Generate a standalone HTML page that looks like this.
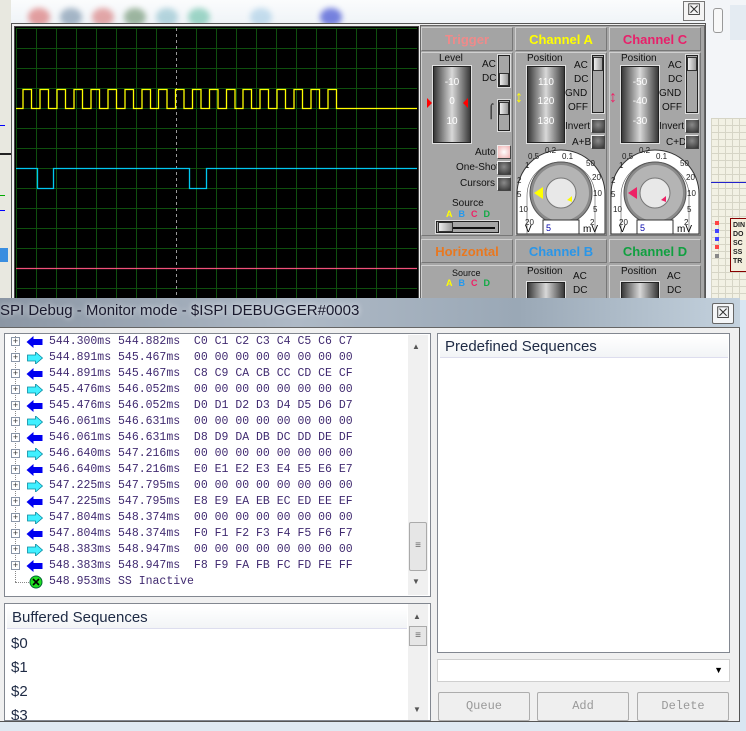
<!DOCTYPE html>
<html><head><meta charset="utf-8"><style>
*{margin:0;padding:0;box-sizing:border-box}
body{width:746px;height:731px;overflow:hidden;position:relative;background:#dfe9f2;font-family:"Liberation Sans",sans-serif}
.a{position:absolute}
.sch{background-color:#f2f1e4;background-image:linear-gradient(#d6d5c6 1px,transparent 1px),linear-gradient(90deg,#d6d5c6 1px,transparent 1px);background-size:7px 7px}
.hd{position:absolute;height:24px;background:#a4a4a4;border:1px solid #cfcfcf;border-right-color:#777;border-bottom-color:#777;font-weight:bold;font-size:13px;text-align:center;line-height:24px}
.pl{position:absolute;background:#a6a6a6;border:1px solid #d0d0d0;border-right-color:#777;border-bottom-color:#777}
.lb{position:absolute;font-size:10px;color:#111}
.drum{position:absolute;border:1px solid #222;background:linear-gradient(90deg,#3a3a3a,#9a9a9a 30%,#d8d8d8 50%,#9a9a9a 70%,#3a3a3a);outline:1px solid #e0e0e0}
.dn{position:absolute;width:100%;text-align:center;font-size:10px;color:#fff}
.btn{position:absolute;width:14px;height:14px;background:radial-gradient(circle at 50% 40%,#8a8a8a,#333);border:1px solid #eee;border-right-color:#444;border-bottom-color:#444}
.sl{position:absolute;background:#a6a6a6;border:1px solid #222;outline:1px solid #ddd}
.th{position:absolute;background:linear-gradient(90deg,#eee,#999);border:1px solid #333}
.row{position:absolute;left:49px;font-family:"Liberation Mono",monospace;font-size:11.5px;color:#402a70;white-space:pre;height:16px;line-height:16px}
.pb{position:absolute;left:11px;width:9px;height:9px;border:1px solid #8a96a8;background:#fff;font-size:9px;line-height:7px;text-align:center;color:#333}
.ar{position:absolute;left:26px}
.wb{position:absolute;background:#fff;border:1px solid #828790}
.bt{position:absolute;top:692px;height:29px;border:1px solid #adadad;background:#efefef;font-family:"Liberation Mono",monospace;font-size:12px;color:#999;text-align:center;line-height:27px;border-radius:2px}
.blob{position:absolute;top:8px;width:22px;height:18px;border-radius:50%;filter:blur(3px);opacity:.45}
</style></head><body>
<div class="a" style="left:0;top:0;width:746px;height:26px;background:linear-gradient(#fbfcfd,#eef3f7)"></div>
<div class="blob" style="left:28px;background:#c33"></div>
<div class="blob" style="left:60px;background:#468"></div>
<div class="blob" style="left:92px;background:#c44"></div>
<div class="blob" style="left:124px;background:#363"></div>
<div class="blob" style="left:156px;background:#6ab"></div>
<div class="blob" style="left:188px;background:#3a8"></div>
<div class="blob" style="left:250px;background:#8bd"></div>
<div class="blob" style="left:320px;background:#23c;opacity:.6"></div>
<div class="a" style="left:0;top:0;width:11px;height:300px;background:#e8e8e0"></div>
<div class="a" style="left:0;top:125px;width:5px;height:1px;background:#00f"></div>
<div class="a" style="left:0;top:153px;width:11px;height:2px;background:#222"></div>
<div class="a" style="left:0;top:195px;width:5px;height:1px;background:#0a0"></div>
<div class="a" style="left:0;top:210px;width:5px;height:1px;background:#00f"></div>
<div class="a" style="left:0;top:248px;width:8px;height:14px;background:#3a8ee0"></div>
<div class="a" style="left:705px;top:0;width:41px;height:300px;background:#f3f5f8"></div>
<div class="a" style="left:713px;top:8px;width:10px;height:25px;border:1px solid #999;border-radius:3px;background:#f8f8f8"></div>
<div class="a" style="left:730px;top:5px;width:16px;height:35px;background:#e4ebf2"></div>
<div class="a sch" style="left:711px;top:118px;width:35px;height:182px"></div>
<div class="a" style="left:711px;top:182px;width:35px;height:1px;background:#22c"></div>
<div class="a" style="left:730px;top:218px;width:18px;height:54px;border:1px solid #800;background:#f3eedd"></div>
<div class="a" style="left:733px;top:221px;font-size:7px;line-height:9px;font-weight:bold;color:#222">DIN<br>DO<br>SC<br>SS<br>TR</div>
<div class="a" style="left:715px;top:221px;width:4px;height:4px;background:#f44"></div>
<div class="a" style="left:715px;top:229px;width:4px;height:4px;background:#44f"></div>
<div class="a" style="left:715px;top:237px;width:4px;height:4px;background:#44f"></div>
<div class="a" style="left:715px;top:245px;width:4px;height:4px;background:#f44"></div>
<div class="a" style="left:715px;top:254px;width:4px;height:4px;background:#888"></div>
<div class="a" style="left:11px;top:23px;width:695px;height:280px;background:#f0f0f0;border:1px solid #555"></div>
<div class="a" style="left:683px;top:1px;width:22px;height:20px;border:1px solid #777;background:#f4f4f4;font-size:16px;line-height:18px;text-align:center;color:#333">☒</div>
<div class="a" style="left:14px;top:26px;width:405px;height:275px;border:1px solid #444;background:#000"></div>
<svg class="a" style="left:0;top:0" width="420" height="300">
<g stroke="#0e4f0e" stroke-width="1">
<path d="M36.5 28V298M56.5 28V298M76.5 28V298M96.5 28V298M116.5 28V298M136.5 28V298M156.5 28V298M196.5 28V298M216.5 28V298M236.5 28V298M256.5 28V298M276.5 28V298M296.5 28V298M316.5 28V298M336.5 28V298M356.5 28V298M376.5 28V298M396.5 28V298M16 28.5H417M16 48.5H417M16 68.5H417M16 88.5H417M16 108.5H417M16 128.5H417M16 148.5H417M16 168.5H417M16 188.5H417M16 208.5H417M16 228.5H417M16 248.5H417M16 268.5H417M16 288.5H417"/>
<path d="M16.5 28V298"/>
</g>
<path d="M176.5 28V298" stroke="#999" stroke-dasharray="3 3"/>
<path fill="none" stroke="#ffff00" stroke-width="1.3" d="M16 108.5H23V89.5H31.5V108.5H40V89.5H48.5V108.5H57V89.5H65.5V108.5H74V89.5H82.5V108.5H91V89.5H99.5V108.5H108V89.5H116.5V108.5H125V89.5H133.5V108.5H142V89.5H150.5V108.5H158.5V89.5H167V108.5H175.5V89.5H184V108.5H192.5V89.5H201V108.5H209.5V89.5H218V108.5H226.5V89.5H235V108.5H243V89.5H251.5V108.5H260V89.5H268.5V108.5H277V89.5H285.5V108.5H294V89.5H302.5V108.5H311V89.5H319.5V108.5H328V89.5H336.5V108.5H417"/>
<path fill="none" stroke="#00c8f0" stroke-width="1.3" d="M16 168.5H37.5V188.5H53.5V168.5H189.5V188.5H206.5V168.5H417"/>
<path stroke="#f0507a" stroke-width="1.3" d="M16 268.5H417"/>
</svg>
<div class="a" style="left:420px;top:25px;width:285px;height:275px;background:#a6a6a6;border:1px solid #666"></div>
<div class="hd" style="left:421px;top:27px;width:92px;color:#f08a8a">Trigger</div>
<div class="hd" style="left:515px;top:27px;width:92px;color:#ffff00">Channel A</div>
<div class="hd" style="left:609px;top:27px;width:92px;color:#e8206a">Channel C</div>
<div class="pl" style="left:421px;top:52px;width:92px;height:184px"></div>
<div class="pl" style="left:515px;top:52px;width:92px;height:184px"></div>
<div class="pl" style="left:609px;top:52px;width:92px;height:184px"></div>
<div class="hd" style="left:421px;top:239px;width:92px;color:#e87820">Horizontal</div>
<div class="hd" style="left:515px;top:239px;width:92px;color:#2a96e8">Channel B</div>
<div class="hd" style="left:609px;top:239px;width:92px;color:#10a040">Channel D</div>
<div class="pl" style="left:421px;top:265px;width:92px;height:40px"></div>
<div class="pl" style="left:515px;top:265px;width:92px;height:40px"></div>
<div class="pl" style="left:609px;top:265px;width:92px;height:40px"></div>
<div class="lb" style="left:439px;top:53px">Level</div>
<div class="drum" style="left:433px;top:66px;width:38px;height:77px"><div class="dn" style="top:10px">-10</div><div class="dn" style="top:29px">0</div><div class="dn" style="top:49px">10</div></div>
<div class="a" style="left:427px;top:98px;width:0;height:0;border:5px solid transparent;border-left-color:#f00"></div>
<div class="a" style="left:463px;top:98px;width:0;height:0;border:5px solid transparent;border-right-color:#f00;border-left:0"></div>
<div class="lb" style="left:482px;top:59px">AC</div><div class="lb" style="left:482px;top:73px">DC</div>
<div class="sl" style="left:498px;top:55px;width:12px;height:32px"><div class="th" style="left:0;top:17px;width:10px;height:13px"></div></div>
<div class="sl" style="left:498px;top:100px;width:12px;height:31px"><div class="th" style="left:0;top:1px;width:10px;height:13px"></div></div>
<div class="lb" style="left:487px;top:102px;font-size:14px">⌠</div>
<div class="lb" style="left:475px;top:147px">Auto</div><div class="btn" style="left:497px;top:145px;background:radial-gradient(#fff,#f0b0b0)"></div>
<div class="lb" style="left:456px;top:162px">One-Shot</div><div class="btn" style="left:497px;top:161px"></div>
<div class="lb" style="left:460px;top:178px">Cursors</div><div class="btn" style="left:497px;top:177px"></div>
<div class="lb" style="left:452px;top:198px">Source</div>
<div class="lb" style="left:446px;top:209px;font-size:9px;font-weight:bold;letter-spacing:6px"><span style="color:#ff0">A</span><span style="color:#29e">B</span><span style="color:#e26">C</span><span style="color:#1a4">D</span></div>
<div class="sl" style="left:436px;top:221px;width:63px;height:12px;background:#a6a6a6"><div class="a" style="left:14px;top:5px;width:44px;height:2px;background:#111"></div><div class="th" style="left:1px;top:0;width:15px;height:10px"></div></div>
<div class="lb" style="left:527px;top:53px">Position</div>
<div class="drum" style="left:527px;top:66px;width:38px;height:77px"><div class="dn" style="top:10px">110</div><div class="dn" style="top:29px">120</div><div class="dn" style="top:49px">130</div></div>
<div class="a" style="left:515px;top:89px;color:#ff0;font-size:16px;font-weight:bold">↕</div>
<div class="lb" style="left:574px;top:59px;line-height:14px">AC<br>DC<br><span style="margin-left:-9px">GND</span><br><span style="margin-left:-6px">OFF</span></div>
<div class="sl" style="left:592px;top:55px;width:12px;height:58px"><div class="th" style="left:0;top:1px;width:10px;height:14px"></div></div>
<div class="lb" style="left:565px;top:121px">Invert</div><div class="btn" style="left:591px;top:119px"></div>
<div class="lb" style="left:572px;top:137px">A+B</div><div class="btn" style="left:591px;top:135px"></div>
<div class="lb" style="left:621px;top:53px">Position</div>
<div class="drum" style="left:621px;top:66px;width:38px;height:77px"><div class="dn" style="top:10px">-50</div><div class="dn" style="top:29px">-40</div><div class="dn" style="top:49px">-30</div></div>
<div class="a" style="left:609px;top:89px;color:#e26;font-size:16px;font-weight:bold">↕</div>
<div class="lb" style="left:668px;top:59px;line-height:14px">AC<br>DC<br><span style="margin-left:-9px">GND</span><br><span style="margin-left:-6px">OFF</span></div>
<div class="sl" style="left:686px;top:55px;width:12px;height:58px"><div class="th" style="left:0;top:1px;width:10px;height:14px"></div></div>
<div class="lb" style="left:659px;top:121px">Invert</div><div class="btn" style="left:685px;top:119px"></div>
<div class="lb" style="left:666px;top:137px">C+D</div><div class="btn" style="left:685px;top:135px"></div>
<svg class="a" style="left:515px;top:144px" width="186" height="92">
<g id="dial">
<path d="M2 90V50A44 44 0 0 1 90 50V90Z" fill="#fff" stroke="#333"/>
<path d="M12 90V52A34 34 0 0 1 80 52V90" fill="none" stroke="#555" stroke-width=".6"/>
<circle cx="46" cy="49" r="31" fill="#8a8a8a" stroke="#555"/>
<circle cx="46" cy="49" r="28" fill="#b4b4b4"/>
<circle cx="46" cy="49" r="15" fill="#e8e8e8" stroke="#777"/>
<rect x="28" y="76" width="36" height="14" fill="#fff" stroke="#333"/>
<g font-size="8" font-family="Liberation Sans" fill="#222">
<text x="13" y="15">0.5</text><text x="30" y="9">0.2</text><text x="47" y="15">0.1</text>
<text x="10" y="24">1</text><text x="2" y="39">2</text><text x="2" y="53">5</text><text x="4" y="68">10</text><text x="10" y="81">20</text>
<text x="71" y="22">50</text><text x="77" y="36">20</text><text x="78" y="52">10</text><text x="78" y="68">5</text><text x="75" y="81">2</text>
</g>
<text x="10" y="88" font-size="10" font-family="Liberation Sans">V</text><text x="68" y="88" font-size="10" font-family="Liberation Sans">mV</text>
<text x="31" y="87" font-size="9" font-family="Liberation Sans" fill="#00a">5</text>
</g>
<path d="M19 49l9-6v12z" fill="#ff0"/><path d="M52 56l5-4v6z" fill="#ff0"/>
<use href="#dial" x="94"/>
<path d="M113 49l9-6v12z" fill="#e26"/><path d="M146 56l5-4v6z" fill="#e26"/>
</svg>
<div class="lb" style="left:452px;top:268px;font-size:9px">Source</div>
<div class="lb" style="left:446px;top:278px;font-size:9px;font-weight:bold;letter-spacing:6px"><span style="color:#ff0">A</span><span style="color:#29e">B</span><span style="color:#e26">C</span><span style="color:#1a4">D</span></div>
<div class="lb" style="left:527px;top:266px">Position</div><div class="lb" style="left:573px;top:271px">AC</div><div class="lb" style="left:573px;top:285px">DC</div>
<div class="lb" style="left:621px;top:266px">Position</div><div class="lb" style="left:667px;top:271px">AC</div><div class="lb" style="left:667px;top:285px">DC</div>
<div class="drum" style="left:527px;top:282px;width:38px;height:20px"></div>
<div class="drum" style="left:621px;top:282px;width:38px;height:20px"></div>
<div class="a" style="left:0;top:298px;width:740px;height:30px;background:linear-gradient(90deg,#8b96a4,#aeb9c6 40%,#9aa8b6 70%,#c4d2de);border-bottom:1px solid #666"></div>
<div class="a" style="left:0;top:302px;font-size:15px;color:#1a1a2e;text-shadow:0 0 6px #fff">SPI Debug - Monitor mode - $ISPI DEBUGGER#0003</div>
<div class="a" style="left:712px;top:303px;width:22px;height:21px;border:1px solid #666;background:#f4f6f8;border-radius:2px;font-size:16px;line-height:19px;text-align:center;color:#333">☒</div>
<div class="a" style="left:0;top:328px;width:740px;height:394px;background:#f0f0f0;border-right:1px solid #555;border-bottom:1px solid #555"></div>
<div class="a" style="left:740px;top:300px;width:6px;height:431px;background:#d8e6f2"></div>
<div class="wb" style="left:4px;top:333px;width:427px;height:264px"></div>
<div class="a" style="left:408px;top:335px;width:20px;height:260px;background:#f0f0f0"></div>
<div class="a" style="left:412px;top:342px;font-size:8px;color:#555">▲</div>
<div class="a" style="left:412px;top:577px;font-size:8px;color:#555">▼</div>
<div class="a" style="left:409px;top:522px;width:18px;height:49px;background:#e6e6e6;border:1px solid #aaa;border-radius:2px;text-align:center;line-height:45px;font-size:10px;color:#666">≡</div>
<div class="a" style="left:15px;top:336px;height:246px;border-left:1px dotted #888"></div>
<div class="a" style="left:15px;top:582px;width:14px;border-top:1px dotted #888"></div>
<svg width="0" height="0" style="position:absolute"><defs>
<symbol id="L" viewBox="0 0 16 12"><path d="M0 6L7 0V3H16V9H7V12Z" fill="#0000f0"/></symbol>
<symbol id="R" viewBox="0 0 16 12"><path d="M16 6L9 0V3H1V9H9V12Z" fill="#40f0ff" stroke="#0a8aa0" stroke-width=".8"/></symbol>
</defs></svg>
<div class="pb" style="top:337px">+</div><svg class="ar" style="top:336px" width="17" height="12"><use href="#L"/></svg><div class="row" style="top:334px">544.300ms 544.882ms  C0 C1 C2 C3 C4 C5 C6 C7</div>
<div class="pb" style="top:353px">+</div><svg class="ar" style="top:352px" width="17" height="12"><use href="#R"/></svg><div class="row" style="top:350px">544.891ms 545.467ms  00 00 00 00 00 00 00 00</div>
<div class="pb" style="top:369px">+</div><svg class="ar" style="top:368px" width="17" height="12"><use href="#L"/></svg><div class="row" style="top:366px">544.891ms 545.467ms  C8 C9 CA CB CC CD CE CF</div>
<div class="pb" style="top:385px">+</div><svg class="ar" style="top:384px" width="17" height="12"><use href="#R"/></svg><div class="row" style="top:382px">545.476ms 546.052ms  00 00 00 00 00 00 00 00</div>
<div class="pb" style="top:401px">+</div><svg class="ar" style="top:400px" width="17" height="12"><use href="#L"/></svg><div class="row" style="top:398px">545.476ms 546.052ms  D0 D1 D2 D3 D4 D5 D6 D7</div>
<div class="pb" style="top:417px">+</div><svg class="ar" style="top:416px" width="17" height="12"><use href="#R"/></svg><div class="row" style="top:414px">546.061ms 546.631ms  00 00 00 00 00 00 00 00</div>
<div class="pb" style="top:433px">+</div><svg class="ar" style="top:432px" width="17" height="12"><use href="#L"/></svg><div class="row" style="top:430px">546.061ms 546.631ms  D8 D9 DA DB DC DD DE DF</div>
<div class="pb" style="top:449px">+</div><svg class="ar" style="top:448px" width="17" height="12"><use href="#R"/></svg><div class="row" style="top:446px">546.640ms 547.216ms  00 00 00 00 00 00 00 00</div>
<div class="pb" style="top:465px">+</div><svg class="ar" style="top:464px" width="17" height="12"><use href="#L"/></svg><div class="row" style="top:462px">546.640ms 547.216ms  E0 E1 E2 E3 E4 E5 E6 E7</div>
<div class="pb" style="top:481px">+</div><svg class="ar" style="top:480px" width="17" height="12"><use href="#R"/></svg><div class="row" style="top:478px">547.225ms 547.795ms  00 00 00 00 00 00 00 00</div>
<div class="pb" style="top:497px">+</div><svg class="ar" style="top:496px" width="17" height="12"><use href="#L"/></svg><div class="row" style="top:494px">547.225ms 547.795ms  E8 E9 EA EB EC ED EE EF</div>
<div class="pb" style="top:513px">+</div><svg class="ar" style="top:512px" width="17" height="12"><use href="#R"/></svg><div class="row" style="top:510px">547.804ms 548.374ms  00 00 00 00 00 00 00 00</div>
<div class="pb" style="top:529px">+</div><svg class="ar" style="top:528px" width="17" height="12"><use href="#L"/></svg><div class="row" style="top:526px">547.804ms 548.374ms  F0 F1 F2 F3 F4 F5 F6 F7</div>
<div class="pb" style="top:545px">+</div><svg class="ar" style="top:544px" width="17" height="12"><use href="#R"/></svg><div class="row" style="top:542px">548.383ms 548.947ms  00 00 00 00 00 00 00 00</div>
<div class="pb" style="top:561px">+</div><svg class="ar" style="top:560px" width="17" height="12"><use href="#L"/></svg><div class="row" style="top:558px">548.383ms 548.947ms  F8 F9 FA FB FC FD FE FF</div>
<svg class="a" style="left:29px;top:575px" width="14" height="14"><circle cx="7" cy="7" r="6" fill="#20e020" stroke="#063"/><path d="M4 4L10 10M10 4L4 10" stroke="#000" stroke-width="1.6"/></svg>
<div class="row" style="top:574px">548.953ms SS Inactive</div>
<div class="wb" style="left:4px;top:603px;width:427px;height:118px;overflow:hidden">
<div class="a" style="left:2px;top:3px;width:400px;height:22px;background:linear-gradient(#fff,#f2f4f6);border-bottom:1px solid #dde;font-size:15px;color:#1e2a44;padding-left:5px;line-height:22px">Buffered Sequences</div>
<div class="a" style="left:6px;top:28px;font-size:15px;color:#1e2a44;line-height:24px">$0<br>$1<br>$2<br>$3</div>
<div class="a" style="left:403px;top:0;width:20px;height:116px;background:#f0f0f0"></div>
<div class="a" style="left:408px;top:8px;font-size:8px;color:#555">▲</div>
<div class="a" style="left:408px;top:101px;font-size:8px;color:#555">▼</div>
<div class="a" style="left:404px;top:22px;width:18px;height:20px;background:#e6e6e6;border:1px solid #aaa;text-align:center;font-size:10px;line-height:18px;color:#666">≡</div>
</div>
<div class="wb" style="left:437px;top:333px;width:293px;height:320px">
<div class="a" style="left:2px;top:2px;width:288px;height:22px;background:linear-gradient(#fff,#f2f4f6);border-bottom:1px solid #dde;font-size:15px;color:#1e2a44;padding-left:5px;line-height:22px">Predefined Sequences</div>
</div>
<div class="a" style="left:437px;top:659px;width:293px;height:23px;background:#fff;border:1px solid #cfcfcf"><div class="a" style="right:6px;top:5px;font-size:9px">▼</div></div>
<div class="bt" style="left:438px;width:92px">Queue</div>
<div class="bt" style="left:537px;width:92px">Add</div>
<div class="bt" style="left:637px;width:92px">Delete</div>
</body></html>
